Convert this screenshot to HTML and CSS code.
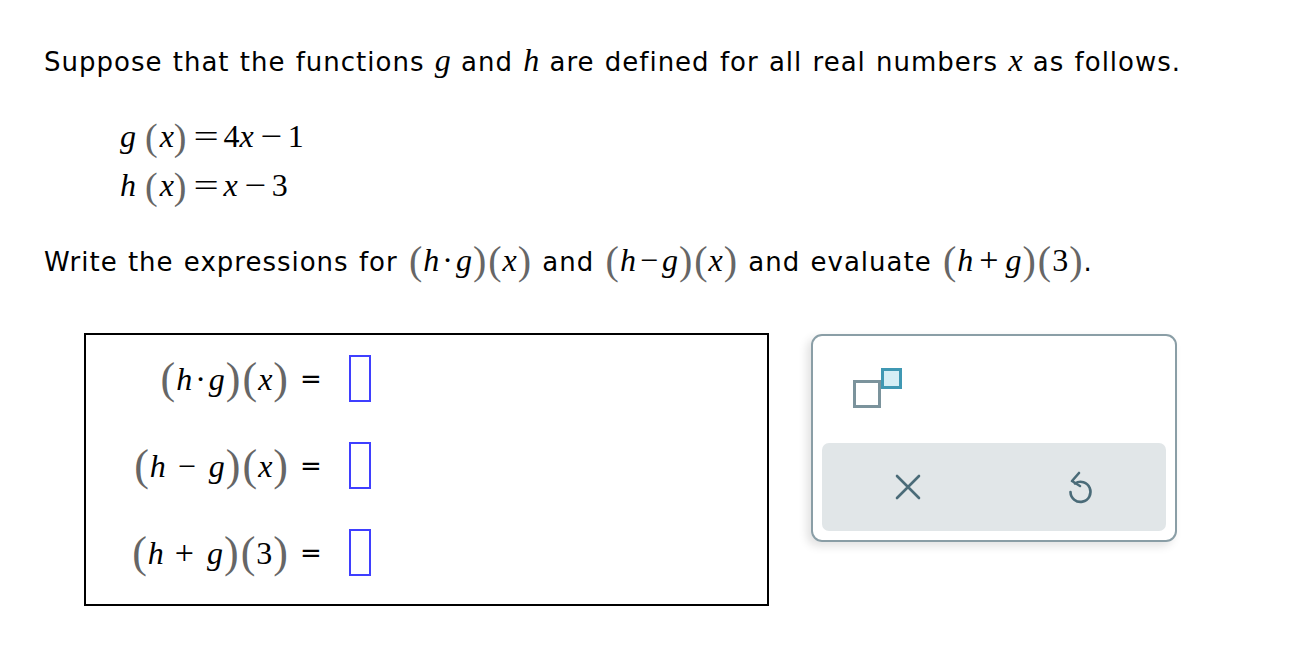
FILE: index.html
```html
<!DOCTYPE html>
<html>
<head>
<meta charset="utf-8">
<link rel="stylesheet" href="styles.css">
</head>
<body>
<div class="page">
  <p class="text line1">Suppose that the functions <span class="mi">g</span> and <span class="mi">h</span> are defined for all real numbers <span class="mi">x</span> as follows.</p>
  <div class="defs">
    <div class="def"><span class="mi">g</span><span class="dp gap">(</span><span class="mi">x</span><span class="dp">)</span><span class="rel">=</span><span class="num">4</span><span class="mi">x</span><span class="bin">−</span><span class="num">1</span></div>
    <div class="def"><span class="mi">h</span><span class="dp gap">(</span><span class="mi">x</span><span class="dp">)</span><span class="rel">=</span><span class="mi">x</span><span class="bin">−</span><span class="num">3</span></div>
  </div>
  <p class="text line2">Write the expressions for <span class="m"><span class="paren">(</span><span class="mi">h</span><span class="dot">·</span><span class="mi">g</span><span class="paren">)</span><span class="paren">(</span><span class="mi">x</span><span class="paren">)</span></span> and <span class="m"><span class="paren">(</span><span class="mi">h</span><span class="bin2">−</span><span class="mi">g</span><span class="paren">)</span><span class="paren">(</span><span class="mi">x</span><span class="paren">)</span></span> and evaluate <span class="m"><span class="paren">(</span><span class="mi">h</span><span class="bin2 plus2">+</span><span class="mi">g</span><span class="paren">)</span><span class="paren">(</span>3<span class="paren">)</span></span>.</p>
  <div class="work">
    <div class="answers">
      <div class="lhs"><span class="bp">(</span><span class="mi">h</span><span class="dot">·</span><span class="mi">g</span><span class="bp">)</span><span class="bp">(</span><span class="mi">x</span><span class="bp">)</span></div>
      <div class="eq">=</div>
      <div class="slot"></div>
      <div class="lhs"><span class="bp">(</span><span class="mi">h</span><span class="op">−</span><span class="mi">g</span><span class="bp">)</span><span class="bp">(</span><span class="mi">x</span><span class="bp">)</span></div>
      <div class="eq">=</div>
      <div class="slot"></div>
      <div class="lhs"><span class="bp">(</span><span class="mi">h</span><span class="op plus">+</span><span class="mi">g</span><span class="bp">)</span><span class="bp">(</span>3<span class="bp">)</span></div>
      <div class="eq">=</div>
      <div class="slot"></div>
    </div>
    <div class="panel">
      <div class="tools">
        <svg class="sup" width="52" height="42" viewBox="0 0 52 42">
          <rect x="2.5" y="14.5" width="25" height="25" fill="#fff" stroke="#7b939c" stroke-width="3"/>
          <rect x="30.5" y="2.5" width="18" height="18" fill="#d5eef5" stroke="#3f98b3" stroke-width="3"/>
        </svg>
      </div>
      <div class="actions">
        <svg width="26" height="26" viewBox="0 0 26 26"><path d="M2 2 L24 24 M24 2 L2 24" stroke="#4a6b78" stroke-width="2.6" stroke-linecap="round" fill="none"/></svg>
        <svg width="28" height="34" viewBox="0 0 28 34"><path d="M9 13.5 A10 10 0 1 1 4.5 22" stroke="#4a6b78" stroke-width="2.6" fill="none" stroke-linecap="round"/><path d="M13 3 L6 11 L14 16" stroke="#4a6b78" stroke-width="2.6" fill="none" stroke-linecap="round" stroke-linejoin="round"/></svg>
      </div>
    </div>
  </div>
</div>
</body>
</html>
```
FILE: styles.css
```css
html, body { margin: 0; padding: 0; background: #fff; }
.page { padding: 0 0 0 44px; color: #000; }
.text { font-family: "DejaVu Sans", Verdana, sans-serif; font-size: 26px; margin: 0; line-height: 30px; letter-spacing: 1px; word-spacing: 1px; }
.line1 { padding-top: 45px; }
.mi { font-family: "Liberation Serif", "Times New Roman", serif; font-style: italic; font-size: 32px; letter-spacing: 0; }
.m, .def { font-family: "Liberation Serif", "Times New Roman", serif; font-size: 32px; letter-spacing: 0; word-spacing: 0; }
.paren { font-family: "Liberation Serif", serif; color: #666; font-size: 40px; vertical-align: -3px; padding: 0 1px; line-height: 30px; }
.dp { color: #666; font-size: 38px; vertical-align: -3px; }
.gap { margin-left: 9px; margin-right: 2px; }
.rel { display: inline-block; transform: scaleX(1.4); margin: 0 9px 0 10px; }
.bin { display: inline-block; transform: scaleX(1.2); margin: 0 8px; }
.bin2 { margin: 0 4px; }
.plus2 { margin: 0 7px 0 6px; font-size: 34px; }
.defs { padding: 41px 0 0 76px; display: flex; flex-direction: column; gap: 12px; }
.def { line-height: 36px; }
.line2 { margin-top: 41px; }
.work { display: flex; align-items: flex-start; gap: 42px; margin-top: 56px; margin-left: 40px; }
.answers { width: 681px; height: 249px; border: 2px solid #000; display: grid; grid-template-columns: 203px 60px 22px; grid-auto-rows: 47px; row-gap: 40px; align-items: center; padding-top: 20px; align-content: start; }
.lhs { justify-self: end; font-family: "Liberation Serif", "Times New Roman", serif; font-size: 32px; white-space: nowrap; line-height: 47px; }
.bp { color: #666; font-size: 44px; vertical-align: -3px; padding: 0 1px; }
.dot { padding: 0 3px; }
.op { margin: 0 13px 0 12px; }
.plus { margin: 0 13px 0 11px; font-size: 34px; }
.eq { font-family: "DejaVu Sans", sans-serif; font-size: 26px; padding-left: 11px; }
.slot { width: 18px; height: 43px; border: 2px solid #3f3fff; }
.panel { width: 344px; height: 204px; border: 2px solid #8a9ea6; border-radius: 11px; box-shadow: -4px 4px 10px rgba(0,0,0,0.12); padding: 0 9px; display: flex; flex-direction: column; margin-top: 1px; }
.tools { height: 107px; display: flex; align-items: flex-start; padding: 31px 0 0 30px; box-sizing: border-box; }
.actions { background: #e1e6e8; border-radius: 7px; height: 88px; display: flex; align-items: center; justify-content: space-between; padding: 0 72px 0 73px; }
```
